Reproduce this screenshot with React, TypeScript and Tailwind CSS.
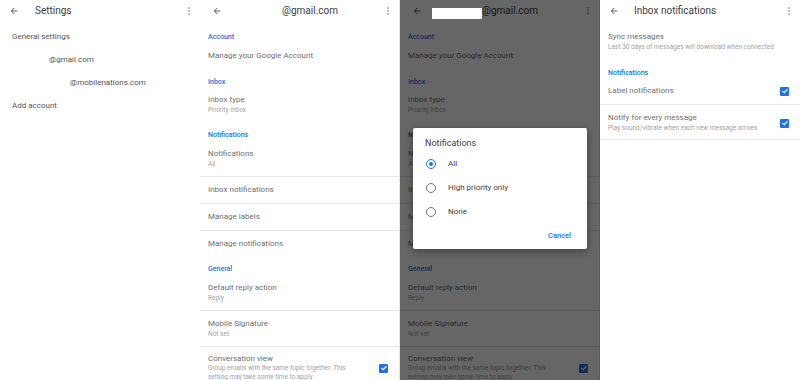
import React from 'react'

const font = { fontFamily: 'Roboto, "Noto Sans", Arial, sans-serif' }

function BackArrow() {
  return (
    <svg viewBox="0 0 24 24" className="w-[10px] h-[10px]" fill="#5f6368">
      <path d="M20 11H7.83l5.59-5.59L12 4l-8 8 8 8 1.41-1.41L7.83 13H20v-2z" />
    </svg>
  )
}

function MoreDots() {
  return (
    <svg viewBox="0 0 24 24" className="w-[10px] h-[10px]" fill="#5f6368">
      <circle cx="12" cy="5" r="1.8" />
      <circle cx="12" cy="12" r="1.8" />
      <circle cx="12" cy="19" r="1.8" />
    </svg>
  )
}

function Checkbox() {
  return (
    <div className="w-[9px] h-[9px] rounded-[1px] bg-[#1a73e8] flex items-center justify-center">
      <svg viewBox="0 0 10 10" className="w-[8px] h-[8px]" fill="none" stroke="white" strokeWidth="1.5">
        <path d="M1.8 5.2 L4 7.2 L8.2 2.8" />
      </svg>
    </div>
  )
}

function Header({ title, blank = 0 }: { title: string; blank?: number }) {
  return (
    <div className="h-[22px] flex items-center">
      <div className="w-[33px] flex justify-center pl-[1px]">
        <BackArrow />
      </div>
      <div className="flex-1 flex items-center text-[10px] text-[#3c4043] leading-none">
        {blank > 0 && <span style={{ width: blank }} className="inline-block" />}
        <span>{title}</span>
      </div>
      <div className="w-[22px] flex justify-center pr-[1px]">
        <MoreDots />
      </div>
    </div>
  )
}

function Section({ label, pt }: { label: string; pt: string }) {
  return (
    <div className={`${pt} pl-[8px] text-[7px] leading-[10px] font-medium text-[#1a73e8]`}>{label}</div>
  )
}

function GmailSettings() {
  return (
    <div>
      <Header title="@gmail.com" blank={49} />
      <Section label="Account" pt="pt-[10px]" />
      <div className="h-[28px] flex items-center pl-[8px] text-[8px] text-[#6f6f6f]">Manage your Google Account</div>
      <Section label="Inbox" pt="pt-[7px]" />
      <div className="pt-[8px] pb-[8px] pl-[8px]">
        <div className="text-[8px] leading-[10px] text-[#6f6f6f]">Inbox type</div>
        <div className="text-[6.5px] leading-[10px] text-[#a3a3a3]">Priority Inbox</div>
      </div>
      <Section label="Notifications" pt="pt-[7px]" />
      <div className="pt-[9px] pb-[7px] pl-[8px] border-b border-[#e8e8e8]">
        <div className="text-[8px] leading-[10px] text-[#6f6f6f]">Notifications</div>
        <div className="text-[6.5px] leading-[10px] text-[#a3a3a3]">All</div>
      </div>
      <div className="h-[27px] flex items-center pl-[8px] text-[8px] text-[#6f6f6f] border-b border-[#e8e8e8]">Inbox notifications</div>
      <div className="h-[27px] flex items-center pl-[8px] text-[8px] text-[#6f6f6f] border-b border-[#e8e8e8]">Manage labels</div>
      <div className="h-[26px] flex items-center pl-[8px] text-[8px] text-[#6f6f6f]">Manage notifications</div>
      <Section label="General" pt="pt-[7px]" />
      <div className="pt-[9px] pb-[7px] pl-[8px] border-b border-[#e8e8e8]">
        <div className="text-[8px] leading-[10px] text-[#6f6f6f]">Default reply action</div>
        <div className="text-[6.5px] leading-[10px] text-[#a3a3a3]">Reply</div>
      </div>
      <div className="pt-[8px] pb-[7px] pl-[8px] border-b border-[#e8e8e8]">
        <div className="text-[8px] leading-[10px] text-[#6f6f6f]">Mobile Signature</div>
        <div className="text-[6.5px] leading-[10px] text-[#a3a3a3]">Not set</div>
      </div>
      <div className="pt-[7px] pl-[8px] pr-[11px] flex items-center">
        <div className="flex-1">
          <div className="text-[8px] leading-[10px] text-[#6f6f6f]">Conversation view</div>
          <div className="text-[6.5px] leading-[9px] text-[#a3a3a3] w-[140px]">
            Group emails with the same topic together. This setting may take some time to apply
          </div>
        </div>
        <Checkbox />
      </div>
    </div>
  )
}

function Radio({ on }: { on?: boolean }) {
  return (
    <div
      className={`w-[10px] h-[10px] rounded-full border-[1.5px] flex items-center justify-center ${
        on ? 'border-[#1a73e8]' : 'border-[#757575]'
      }`}
    >
      {on && <div className="w-[4px] h-[4px] rounded-full bg-[#1a73e8]" />}
    </div>
  )
}

export default function App() {
  const options = [
    { label: 'All', on: true },
    { label: 'High priority only', on: false },
    { label: 'None', on: false },
  ]

  return (
    <div className="flex w-[800px] h-[380px] bg-white overflow-hidden" style={font}>
      {/* panel 1 */}
      <div className="w-[200px] h-[380px]">
        <div className="h-[22px] flex items-center">
          <div className="w-[27px] flex justify-center">
            <BackArrow />
          </div>
          <div className="flex-1 pl-[8px] text-[10px] text-[#3c4043] leading-none">Settings</div>
          <div className="w-[22px] flex justify-center">
            <MoreDots />
          </div>
        </div>
        <div className="pt-[3px] text-[8px] text-[#555]">
          <div className="h-[23px] flex items-center pl-[12px]">General settings</div>
          <div className="h-[23px] flex items-center pl-[49px]">@gmail.com</div>
          <div className="h-[23px] flex items-center pl-[70px]">@mobilenations.com</div>
          <div className="h-[23px] flex items-center pl-[12px]">Add account</div>
        </div>
      </div>

      {/* panel 2 */}
      <div className="w-[200px] h-[380px] overflow-hidden border-r border-[#e6e6e6]">
        <GmailSettings />
      </div>

      {/* panel 3 with dialog */}
      <div className="w-[199px] h-[380px] overflow-hidden relative">
        <GmailSettings />
        <div className="absolute inset-0 bg-black/60" />
        <div className="absolute left-[32px] top-[8px] w-[50px] h-[11px] bg-white" />
        <div className="absolute left-[13px] top-[128px] w-[174px] h-[121px] bg-white rounded-[2px] shadow-[0_2px_8px_rgba(0,0,0,0.4)]">
          <div className="pt-[9px] pl-[12px] text-[9px] leading-[12px] text-[#3c4043]">Notifications</div>
          <div className="mt-[3px]">
            {options.map((o) => (
              <div key={o.label} className="h-[24px] flex items-center pl-[13px] gap-[12px]">
                <Radio on={o.on} />
                <span className="text-[8px] leading-[10px] text-[#3c4043]">{o.label}</span>
              </div>
            ))}
          </div>
          <div className="h-[24px] flex items-center justify-end pr-[16px] text-[7.5px] font-medium text-[#1a73e8]">
            Cancel
          </div>
        </div>
      </div>

      {/* panel 4 */}
      <div className="w-[201px] h-[380px] border-l-[1px] border-[#5a5a5a]">
        <div className="h-[22px] flex items-center">
          <div className="w-[27px] flex justify-center">
            <BackArrow />
          </div>
          <div className="flex-1 pl-[7px] text-[10px] text-[#3c4043] leading-none">Inbox notifications</div>
          <div className="w-[22px] flex justify-center">
            <MoreDots />
          </div>
        </div>
        <div className="pt-[10px] pl-[8px]">
          <div className="text-[8px] leading-[10px] text-[#6f6f6f]">Sync messages</div>
          <div className="text-[6.5px] leading-[11px] text-[#a3a3a3]">Last 30 days of messages will download when connected</div>
        </div>
        <div className="pt-[15px] pl-[8px] text-[7px] leading-[10px] font-medium text-[#1a73e8]">Notifications</div>
        <div className="h-[27px] flex items-center pl-[8px] pr-[11px] border-b border-[#e8e8e8]">
          <span className="flex-1 text-[8px] text-[#6f6f6f]">Label notifications</span>
          <Checkbox />
        </div>
        <div className="pt-[8px] pb-[6px] pl-[8px] pr-[11px] flex items-center border-b border-[#e8e8e8]">
          <div className="flex-1">
            <div className="text-[8px] leading-[10px] text-[#6f6f6f]">Notify for every message</div>
            <div className="text-[6.5px] leading-[10px] text-[#a3a3a3]">Play sound/vibrate when each new message arrives</div>
          </div>
          <Checkbox />
        </div>
      </div>
    </div>
  )
}
